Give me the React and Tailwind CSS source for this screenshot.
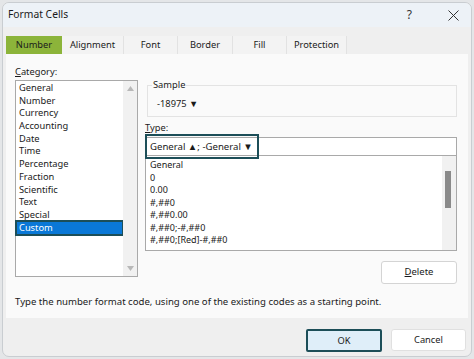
import React from "react";

const F = { fontFamily: '"Noto Sans", "Open Sans", sans-serif' };

const cats = ["General","Number","Currency","Accounting","Date","Time","Percentage","Fraction","Scientific","Text","Special","Custom"];
const types = ["General","0","0.00","#,##0","#,##0.00","#,##0;-#,##0","#,##0;[Red]-#,##0"];
const tabs = ["Number","Alignment","Font","Border","Fill","Protection"];
const tabW = ["w-[56px]","w-[62px]","w-[54px]","w-[55px]","w-[54px]","w-[60px]"];

export default function App() {
  return (
    <div className="w-[474px] h-[359px] bg-[#e4e6e8] p-[2px] text-[#1a1a1a]" style={F}>
      <div className="w-full h-full rounded-[7px] border border-[#c9cdd1] bg-[#efefef] flex flex-col overflow-hidden">
        {/* title bar */}
        <div className="h-[24px] bg-[#edf2f7] flex items-center pl-[5px] pr-[12px] shrink-0">
          <span className="text-[10.3px] flex-1">Format Cells</span>
          <span className="text-[12px] mr-[36px] text-[#333]">?</span>
          <svg width="11" height="11" viewBox="0 0 11 11"><path d="M0.5 0.5L10.5 10.5M10.5 0.5L0.5 10.5" stroke="#333" strokeWidth="1"/></svg>
        </div>
        {/* tabs */}
        <div className="flex pl-[3px] pt-[9px] bg-[#efefef] shrink-0">
          {tabs.map((t, i) => (
            <div key={t} className={`${tabW[i]} h-[18px] flex items-center justify-center text-[9.3px] ${i === 0 ? "bg-[#8cb43a] text-[#1a1a1a]" : "bg-[#f3f3f3] border-r border-[#e2e2e2]"}`}>{t}</div>
          ))}
        </div>
        {/* content panel */}
        <div className="mx-[3px] bg-[#fafafa] h-[264px] shrink-0 flex flex-col">
          <div className="flex pl-[9px] pt-[11px]">
            {/* left */}
            <div className="w-[123px] flex flex-col">
              <div className="text-[9.3px] leading-[14px] h-[15px]"><span className="underline">C</span>ategory:</div>
              <div className="h-[197px] border border-[#a9a9a9] bg-white flex">
                <div className="flex-1 flex flex-col pt-[1px]">
                  {cats.map((c) => (
                    <div key={c} className={`text-[9.3px] pl-[3px] ${c === "Custom" ? "bg-[#0a78d7] text-white outline-2 outline-[#1c4e58] -outline-offset-1 h-[14px] leading-[14px] mt-[-1px]" : "h-[12.7px] leading-[12.7px]"}`}>{c}</div>
                  ))}
                </div>
                <div className="w-[14px] bg-[#f1f1f1] flex flex-col justify-between items-center py-[5px]">
                  <svg width="7" height="5" viewBox="0 0 7 5"><path d="M3.5 0L7 5H0Z" fill="#b8b8b8"/></svg>
                  <svg width="7" height="5" viewBox="0 0 7 5"><path d="M0 0H7L3.5 5Z" fill="#b8b8b8"/></svg>
                </div>
              </div>
            </div>
            {/* right */}
            <div className="ml-[7px] w-[312px] flex flex-col">
              <div className="ml-[2px] mt-[20px] h-[32px] border border-[#e3e3e3] relative">
                <div className="absolute -top-[7px] left-[4px] bg-[#fafafa] px-[1px] text-[9.3px] leading-[12px]">Sample</div>
                <div className="pt-[11px] pl-[9px] text-[9.3px] leading-[14px]">-18975 ▼</div>
              </div>
              <div className="mt-[4px] text-[9.3px] leading-[14px] h-[16px]"><span className="underline">T</span>ype:</div>
              <div className="relative h-[19px] border border-[#a9a9a9] bg-white">
                <div className="absolute -left-[1px] -top-[4px] w-[114px] h-[25px] border-2 border-[#1c4e58]"></div>
                <div className="pl-[4px] text-[9.6px] leading-[17px]">General ▲; -General ▼</div>
              </div>
              <div className="h-[95px] border border-t-0 border-[#a9a9a9] bg-white flex">
                <div className="flex-1 flex flex-col pl-[4px] pt-[3px]">
                  {types.map((t) => (
                    <div key={t} className="h-[12.5px] leading-[12.5px] text-[9px]">{t}</div>
                  ))}
                </div>
                <div className="w-[14px] bg-[#f1f1f1] pt-[15px] pl-[3px]">
                  <div className="w-[6px] h-[37px] bg-[#8a8a8a]"></div>
                </div>
              </div>
              <div className="flex justify-end mt-[10px]">
                <div className="w-[76px] h-[23px] bg-white border border-[#d4d4d4] rounded-[3px] flex items-center justify-center text-[9.5px]"><span className="underline">D</span>elete</div>
              </div>
            </div>
          </div>
          <div className="pl-[9px] mt-[11px] text-[9.6px] leading-[14px]">Type the number format code, using one of the existing codes as a starting point.</div>
        </div>
        {/* bottom buttons */}
        <div className="flex justify-end gap-[9px] pr-[5px] pt-[11px]">
          <div className="w-[76px] h-[23px] bg-[#dfeef9] border-2 border-[#1c4e58] rounded-[2px] flex items-center justify-center text-[9.3px]">OK</div>
          <div className="w-[75px] h-[22px] bg-white border border-[#e0e0e0] rounded-[3px] flex items-center justify-center text-[9.3px]">Cancel</div>
        </div>
      </div>
    </div>
  );
}
